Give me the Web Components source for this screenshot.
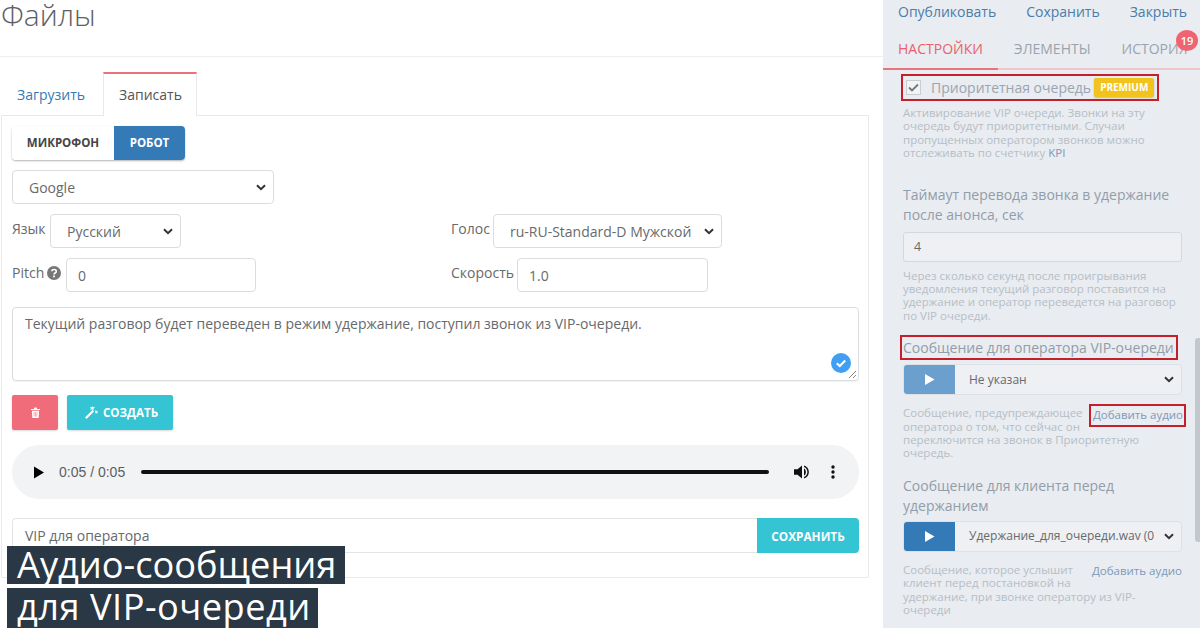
<!DOCTYPE html>
<html lang="ru">
<head>
<meta charset="utf-8">
<title>Файлы</title>
<style>
  html, body { margin: 0; height: 100%; overflow: hidden; background: #fff; }
  body { font: 14px/20px "Open Sans", "Liberation Sans", sans-serif; color: #676a6c; }
</style>
</head>
<body>
<app-page></app-page>

<script>
const CHEVRON = `<svg width="10" height="7" viewBox="0 0 10 7"><path d="M1 1.200 5 5.200 9 1.200" fill="none" stroke="#333" stroke-width="2"/></svg>`

const define = (name, css, html) => {
  const template = document.createElement('template')
  template.innerHTML = `<style>${css}</style>${html}`
  customElements.define(name, class extends HTMLElement {
    constructor() {
      super()
      this.attachShadow({ mode: 'open' })
      this.shadowRoot.appendChild(template.content.cloneNode(true))
    }
  })
}

define('field-select', `
  :host { display: flex; align-items: center; justify-content: space-between; box-sizing: border-box;
    height: 34px; padding: 1px 7px 0 16px; background: #fff; border: 1px solid #d9dde0; border-radius: 4px;
    font-size: 14px; color: #676a6c; white-space: nowrap; overflow: hidden; }
`, `<slot></slot>${CHEVRON}`)

define('text-field', `
  :host { display: flex; align-items: center; box-sizing: border-box; height: 34px; padding: 1px 11px 0;
    background: #fff; border: 1px solid #d9dde0; border-radius: 4px; font-size: 14px; color: #676a6c; }
`, `<slot></slot>`)

define('toggle-buttons', `
  :host { display: flex; width: 173px; height: 34px; border-radius: 4px; overflow: hidden;
    box-shadow: 0 1px 2px rgba(0,0,0,.3); font-size: 11.500px; font-weight: 700; }
  span { display: flex; align-items: center; justify-content: center; }
  .off { width: 102px; color: #444; background: #fff; }
  .on { width: 71px; color: #fff; background: #337ab7; }
`, `<span class="off">МИКРОФОН</span><span class="on">РОБОТ</span>`)

define('audio-player', `
  :host { display: flex; align-items: center; height: 54px; padding: 0 24px 0 21px; background: #f1f3f4;
    border-radius: 27px; font: 14px "Liberation Sans", sans-serif; color: #5b5e61; }
  .time { margin-left: 14px; white-space: nowrap; }
  .track { flex: 1; height: 4px; margin: 0 25px 0 16px; border-radius: 2px; background: #111; }
  svg { display: block; flex: none; }
  .more { margin-left: 21px; }
`, `
  <svg width="12" height="13" viewBox="0 0 12 13"><path d="M1 .5 11 6.5 1 12.500Z" fill="#000"/></svg>
  <span class="time">0:05 / 0:05</span>
  <div class="track"></div>
  <svg width="16" height="16" viewBox="0 0 16 16"><path d="M0 5.200H3.500L8 1.500V14.500L3.500 10.800H0Z" fill="#111"/><path d="M10 4.500C12.500 5.500 12.500 10.500 10 11.500Z" fill="#111"/><path d="M10 1.500C16.500 3 16.500 13 10 14.500V13C14.500 11.500 14.500 4.500 10 3Z" fill="#111"/></svg>
  <svg class="more" width="4" height="14" viewBox="0 0 4 14"><circle cx="2" cy="2" r="1.700" fill="#111"/><circle cx="2" cy="7" r="1.700" fill="#111"/><circle cx="2" cy="12" r="1.700" fill="#111"/></svg>
`)

define('audio-select', `
  :host { display: flex; box-sizing: border-box; height: 31px; border: 1px solid #dde1e5; border-radius: 4px; overflow: hidden;
    font-size: 12px; color: #676a6c; background: #eef0f3; }
  .play { flex: none; width: 51px; display: flex; align-items: center; justify-content: center; background: var(--play, #337ab7); }
  .value { flex: 1; display: flex; align-items: center; justify-content: space-between; padding: 0 7px 0 14px; white-space: nowrap; overflow: hidden; }
`, `
  <div class="play"><svg width="11" height="11" viewBox="0 0 11 11"><path d="M1 0 10.500 5.500 1 11Z" fill="#fff"/></svg></div>
  <div class="value"><slot></slot>${CHEVRON}</div>
`)

define('hint-text', `
  :host { display: block; font-size: 11.500px; line-height: 13.400px; color: #b6bec6; }
  ::slotted(a) { color: #7d99b8; }
`, `<slot></slot>`)

define('field-title', `
  :host { display: block; font-size: 14px; line-height: 20px; color: #929daa; }
`, `<slot></slot>`)

define('files-pane', `
  :host { display: block; height: 628px; font-size: 14px; color: #676a6c; }
  h1 { margin: 0; height: 56px; border-bottom: 1px solid #eceef0; padding-left: 1px;
    font-size: 30px; line-height: 30px; font-weight: 300; color: #5d6164; }
  .tabs { display: flex; align-items: stretch; height: 43px; margin-top: 15px; }
  .tabs a { width: 103px; padding: 13px 0 0 17px; box-sizing: border-box; color: #337ab7; }
  .tabs span { width: 94px; box-sizing: border-box; padding: 11px 0 0 1px; text-align: center; margin-bottom: -1px; position: relative;
    background: #fff; border: 1px solid #e7eaec; border-bottom: 0; border-top: 2px solid #e8737a; color: #555; }
  .box { height: 463px; margin: 0 14px 0 1px; box-sizing: border-box; padding: 10px 9px 0 10px; border: 1px solid #e7eaec; border-radius: 0 0 2px 2px; }
  .google { width: 262px; margin-top: 10px; }
  .row { display: grid; grid-template-columns: 439px 1fr; margin-top: 10px; }
  .cell { display: flex; align-items: center; }
  .cell label { display: flex; align-items: center; gap: 3px; height: 30px; margin-bottom: 4px; white-space: nowrap; }
  .area { position: relative; height: 74px; margin-top: 15px; box-sizing: border-box; padding: 6px 12px; border: 1px solid #d9dde0; border-radius: 4px; box-shadow: 0 1px 1px rgba(0,0,0,.05); }
  .tick { position: absolute; right: 7px; bottom: 7px; }
  .grip { position: absolute; right: 1px; bottom: 1px; }
  .actions { display: flex; gap: 9px; margin-top: 14px; }
  button { display: flex; align-items: center; justify-content: center; gap: 5px; height: 35px; padding: 0; border: 0; border-radius: 2px;
    color: #fff; font: 700 12px "Open Sans", sans-serif; box-shadow: 0 1px 2px rgba(0,0,0,.15); }
  .del { width: 46px; background: #f16c7a; }
  .make { width: 106px; padding-left: 3px; background: #35c4d4; font-size: 11.600px; }
  audio-player { margin-top: 15px; }
  .save { display: flex; height: 35px; margin-top: 19px; }
  .save div { flex: 1; box-sizing: border-box; padding: 7px 12px; border: 1px solid #e2e4e6; border-right: 0; border-radius: 4px 0 0 4px; }
  .save button { width: 102px; background: #35c4d4; border-radius: 0 4px 4px 0; box-shadow: none; font-size: 11.800px; }
`, `
  <h1>Файлы</h1>
  <div class="tabs"><a>Загрузить</a><span>Записать</span></div>
  <div class="box">
    <toggle-buttons></toggle-buttons>
    <field-select class="google">Google</field-select>
    <div class="row">
      <div class="cell"><label style="width:38px">Язык</label><field-select style="width:131px">Русский</field-select></div>
      <div class="cell"><label style="width:42px">Голос</label><field-select style="width:229px">ru-RU-Standard-D Мужской</field-select></div>
    </div>
    <div class="row">
      <div class="cell"><label style="width:54px">Pitch
        <svg width="14" height="14" viewBox="0 0 14 14"><circle cx="7" cy="7" r="7" fill="#777"/><path d="M4.800 5.300C5 2.900 9.300 3 9.300 5.400 9.300 7 7 6.900 7 8.400" fill="none" stroke="#fff" stroke-width="1.600"/><rect x="6.100" y="9.500" width="1.800" height="1.800" fill="#fff"/></svg></label>
        <text-field style="width:190px">0</text-field></div>
      <div class="cell"><label style="width:66px">Скорость</label><text-field style="width:191px">1.0</text-field></div>
    </div>
    <div class="area">Текущий разговор будет переведен в режим удержание, поступил звонок из VIP-очереди.
      <svg class="tick" width="20" height="20" viewBox="0 0 20 20"><circle cx="10" cy="10" r="10" fill="#3f9ff5"/><path d="M5.800 10.200 8.800 13 14.200 7.500" fill="none" stroke="#fff" stroke-width="2"/></svg>
      <svg class="grip" width="9" height="9" viewBox="0 0 9 9"><path d="M1 8 8 1M5 8 8 5" stroke="#888" stroke-width="1"/></svg>
    </div>
    <div class="actions">
      <button class="del"><svg width="9" height="11" viewBox="0 0 10 12"><path d="M0 2H3.300L3.800.500H6.200L6.700 2H10V3.300H0ZM1 4H9L8.500 12H1.500Z" fill="#fff"/><path d="M3.500 5.500V10.500M5 5.500V10.500M6.500 5.500V10.500" stroke="#f16c7a" stroke-width=".6"/></svg></button>
      <button class="make"><svg width="13" height="13" viewBox="0 0 13 13"><path d="M0 11.500 7.500 4 9 5.500 1.500 13Z" fill="#fff"/><path d="M5 1 6 2.500 5 4 7 3.300 8.500 4.500 8.500 2.500 10 1.500 8 1 7.500 0 6.800 1.200ZM10 5 10.500 6.200 10 7.500 11.300 7 12.500 8 12.300 6.300 13 5.300 11.500 5.200 11 4Z" fill="#fff"/></svg>СОЗДАТЬ</button>
    </div>
    <audio-player></audio-player>
    <div class="save"><div>VIP для оператора</div><button>СОХРАНИТЬ</button></div>
  </div>
`)

define('settings-panel', `
  :host { display: block; position: relative; height: 628px; background: #e9ecf0; font-size: 14px; overflow: hidden; }
  .top { display: flex; gap: 30px; padding: 2px 0 0 15px; height: 29px; color: #4b7dab; white-space: nowrap; }
  .tabs { position: relative; display: flex; height: 39px; box-sizing: border-box; padding-top: 8px; border-bottom: 2px solid #efc6ca; white-space: nowrap; color: #9aa4ae; }
  .tabs span { padding: 0 15px; margin-right: 1px; }
  .tabs .on { color: #e8616b; border-bottom: 2px solid #e8737a; height: 29px; width: 85px; margin-right: 1px; padding-right: 15px; }
  .badge { position: absolute; left: 293px; top: -1px; width: 22px; height: 21px; border-radius: 50%; background: #ef6470;
    color: #fff; font-size: 11px; line-height: 21px; font-weight: 600; text-align: center; }
  .body { padding: 4px 18px 0 20px; }
  .mark { box-sizing: border-box; border: 2px solid #c3202b; }
  .prio { display: flex; align-items: center; width: 258px; height: 27px; margin-left: -2px; box-sizing: border-box; padding-left: 3px; color: #9aa5b1; font-size: 14px; white-space: nowrap; }
  .check { display: flex; align-items: center; justify-content: center; width: 15px; height: 15px; margin-right: 10px; box-sizing: border-box; background: #f2f3f5; border: 1px solid #c9ced3; }
  .premium { margin-left: 3px; padding: 0 6px; height: 19px; line-height: 19px; border-radius: 2px; background: #f2c31c; color: #fff; font-size: 10px; font-weight: 700; box-shadow: 0 1px 2px rgba(0,0,0,.2); }
  hint-text { margin-top: 5px; }
  .timeout { margin-top: 25px; }
  .num { display: flex; align-items: center; height: 30px; margin-top: 7px; box-sizing: border-box; padding-left: 10px; border: 1px solid #d5d9dd; border-radius: 3px; background: #eef0f3; color: #676a6c; font-size: 12.500px; }
  .num + hint-text { margin-top: 7px; }
  .oper { width: 278px; height: 25px; margin: 13px 0 4px -3px; padding-left: 1px; line-height: 22px; white-space: nowrap; }
  .with-link { position: relative; margin-top: 11px; padding-right: 99px; white-space: nowrap; }
  .with-link hint-text { margin-top: 0; }
  .link { position: absolute; right: 0; top: -1px; font-size: 11.500px; color: #7d99b8; white-space: nowrap; line-height: 18px; }
  .link.mark { right: -4px; top: -2px; height: 23px; padding: 0 1px 0 2px; }
  .client { margin-top: 16px; }
  .scroll { position: absolute; right: 0; top: 338px; width: 5px; height: 204px; border-radius: 3px 0 0 3px; background: #c3c8ce; }
`, `
  <div class="top"><span>Опубликовать</span><span>Сохранить</span><span>Закрыть</span></div>
  <div class="tabs"><span class="on">НАСТРОЙКИ</span><span>ЭЛЕМЕНТЫ</span><span>ИСТОРИЯ</span><div class="badge">19</div></div>
  <div class="body">
    <div class="prio mark"><span class="check"><svg width="11" height="9" viewBox="0 0 11 9"><path d="M1 4.500 4 7.500 10 1.500" fill="none" stroke="#777" stroke-width="1.800"/></svg></span>Приоритетная очередь<span class="premium">PREMIUM</span></div>
    <hint-text>Активирование VIP очереди. Звонки на эту<br>очередь будут приоритетными. Случаи<br>пропущенных оператором звонков можно<br>отслеживать по счетчику <a>KPI</a></hint-text>
    <field-title class="timeout">Таймаут перевода звонка в удержание<br>после анонса, сек</field-title>
    <div class="num">4</div>
    <hint-text>Через сколько секунд после проигрывания<br>уведомления текущий разговор поставится на<br>удержание и оператор переведется на разговор<br>по VIP очереди.</hint-text>
    <field-title class="oper mark">Сообщение для оператора VIP-очереди</field-title>
    <audio-select style="--play:#6b9fcd">Не указан</audio-select>
    <div class="with-link"><hint-text>Сообщение, предупреждающее<br>оператора о том, что сейчас он<br>переключится на звонок в Приоритетную<br>очередь.</hint-text><span class="link mark">Добавить аудио</span></div>
    <field-title class="client">Сообщение для клиента перед<br>удержанием</field-title>
    <audio-select style="margin-top:5px">Удержание_для_очереди.wav (0</audio-select>
    <div class="with-link" style="margin-top:11px"><hint-text>Сообщение, которое услышит<br>клиент перед постановкой на<br>удержание, при звонке оператору из VIP-<br>очереди</hint-text><span class="link">Добавить аудио</span></div>
  </div>
  <div class="scroll"></div>
`)

define('caption-overlay', `
  :host { position: absolute; left: 7px; top: 546px; display: flex; flex-direction: column; align-items: flex-start; gap: 4px;
    font-size: 36.200px; color: #fff; }
  span { display: block; height: 38px; line-height: 36px; padding: 0 9px 0 10px; background: #2a3744; white-space: nowrap; }
  span + span { height: 40px; padding-right: 7px; letter-spacing: .5px; }
`, `<span>Аудио-сообщения</span><span>для VIP-очереди</span>`)

define('app-page', `
  :host { display: grid; grid-template-columns: 883px 317px; position: relative; width: 1200px; height: 628px; overflow: hidden; }
`, `<files-pane></files-pane><settings-panel></settings-panel><caption-overlay></caption-overlay>`)
</script>
</body>
</html>
